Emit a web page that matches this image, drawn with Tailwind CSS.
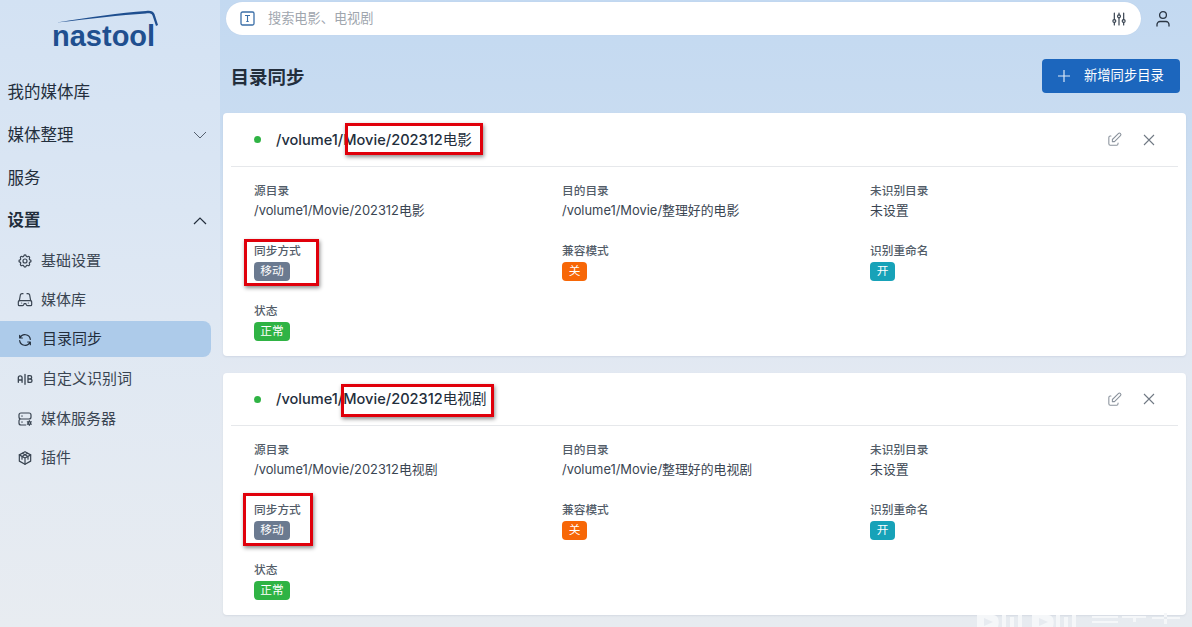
<!DOCTYPE html>
<html lang="zh"><head><meta charset="utf-8">
<script src="https://cdn.jsdelivr.net/npm/@tailwindcss/browser@4"></script>
</head>
<body class="m-0 overflow-hidden font-['Inter','Noto_Sans_CJK_SC',sans-serif] text-[#232e3c]">
<div class="relative w-[1192px] h-[627px] overflow-hidden flex bg-[linear-gradient(180deg,#c3d9f1_0%,#c9dcf1_20%,#e3e9f2_60%,#e7ebf0_100%)]">
  <aside class="w-[220px] shrink-0 h-full flex flex-col bg-[linear-gradient(180deg,#d3e2f3_0%,#dfe8f3_50%,#e8ecf1_100%)]">
    <div class="relative h-[70px] shrink-0">
      <svg class="absolute left-[50px] top-[6px]" width="112" height="24" viewBox="0 0 112 24"><path d="M7 16.500 C 40 11, 70 7, 96 5 C 101 4.600 103 5 104.500 8 L108 19 L106 20 L102.500 9.500 C 101.500 7.500 100 7.200 96 7.400 C 70 9, 40 12.500 7 16.500 Z" fill="#1f4f8f"/></svg>
      <div class="absolute left-[52px] top-[19px] text-[29px] leading-[34px] font-bold text-[#1f4f8f] font-['Liberation_Sans',sans-serif]">nastool</div>
    </div>
    <nav class="flex flex-col">
      <div class="h-[43px] flex items-center pl-[7.500px] pt-[1px] text-[16.500px]">我的媒体库</div>
      <div class="h-[43px] flex items-center justify-between pl-[7.500px] pt-[1px] pr-[13px] text-[16.500px]">媒体整理
        <svg width="14" height="8" viewBox="0 0 14 8" fill="none" stroke="#55606e" stroke-width="1"><path d="M1 1l6 6 6-6"/></svg></div>
      <div class="h-[43px] flex items-center pl-[7.500px] pt-[1px] text-[16.500px]">服务</div>
      <div class="h-[43px] flex items-center justify-between pl-[7.500px] pr-[13px] text-[16.500px] font-bold">设置
        <svg width="14" height="8" viewBox="0 0 14 8" fill="none" stroke="#232e3c" stroke-width="1.200"><path d="M1 7l6-6 6 6"/></svg></div>
      <div class="flex flex-col text-[15px] text-[#3a4552] mr-[9px] -mt-[1px]">
        <div class="h-[39.500px] flex items-center gap-[8px] pl-[17px]">
          <svg width="16" height="16" viewBox="0 0 24 24" fill="none" stroke="#3a4552" stroke-width="1.800" stroke-linecap="round" stroke-linejoin="round"><path d="M10.300 4.300c.4-1.800 3-1.800 3.400 0a1.700 1.700 0 0 0 2.600 1.100c1.500-.9 3.300.8 2.400 2.400a1.700 1.700 0 0 0 1 2.500c1.800.4 1.800 3 0 3.400a1.700 1.700 0 0 0-1 2.600c.9 1.500-.9 3.300-2.400 2.400a1.700 1.700 0 0 0-2.600 1c-.4 1.800-3 1.800-3.400 0a1.700 1.700 0 0 0-2.600-1c-1.500.9-3.300-.9-2.400-2.400a1.700 1.700 0 0 0-1-2.600c-1.800-.4-1.800-3 0-3.400a1.700 1.700 0 0 0 1-2.500c-.9-1.600.9-3.300 2.400-2.400 1 .6 2.300.1 2.600-1.100z"/><circle cx="12" cy="12" r="3"/></svg>基础设置</div>
        <div class="h-[39.500px] flex items-center gap-[8px] pl-[17px]">
          <svg width="16" height="16" viewBox="0 0 24 24" fill="none" stroke="#3a4552" stroke-width="1.800" stroke-linecap="round" stroke-linejoin="round"><path d="M2 14.500V19a1.500 1.500 0 0 0 1.500 1.500H8c1 0 1.600-.6 2-1.500l.6-1.500h2.800L14 19c.4.9 1 1.500 2 1.500h4.500A1.500 1.500 0 0 0 22 19v-4.500a1.500 1.500 0 0 0-1.500-1.500h-17A1.500 1.500 0 0 0 2 14.500z"/><path d="M3.500 13 5 4.500C5.300 3.200 6 2.500 7.500 2.500H9M20.500 13 19 4.500C18.700 3.200 18 2.500 16.500 2.500H15M7 16.500h.01M17 16.500h.01"/></svg>媒体库</div>
        <div class="h-[35.500px] mt-[1.250px] mb-[2.750px] pt-[1px] flex items-center gap-[9px] pl-[17px] bg-[#adcbea] rounded-r-lg text-[#232e3c]">
          <svg width="16" height="16" viewBox="0 0 24 24" fill="none" stroke="#232e3c" stroke-width="1.800" stroke-linecap="round" stroke-linejoin="round"><path d="M20 11A8.100 8.100 0 0 0 4.500 9M4 5v4h4"/><path d="M4 13a8.100 8.100 0 0 0 15.500 2M20 19v-4h-4"/></svg>目录同步</div>
        <div class="h-[39.500px] flex items-center gap-[9px] pl-[17px]">
          <svg width="16" height="16" viewBox="0 0 24 24" fill="none" stroke="#3a4552" stroke-width="2" stroke-linecap="round" stroke-linejoin="round"><path d="M2 17V10a2.800 2.800 0 0 1 5.600 0v7M2 13.500h5.600M12 5v15M16.500 7v10M16.500 7h3a2.500 2.500 0 0 1 0 5h-3 3.500a2.500 2.500 0 0 1 0 5h-3.500"/></svg>自定义识别词</div>
        <div class="h-[39.500px] flex items-center gap-[8px] pl-[17px]">
          <svg width="16" height="16" viewBox="0 0 24 24" fill="none" stroke="#3a4552" stroke-width="1.800" stroke-linecap="round" stroke-linejoin="round"><path d="M3 6a3 3 0 0 1 3-3h12a3 3 0 0 1 3 3v3a3 3 0 0 1-3 3H6a3 3 0 0 1-3-3zM13 21H6a3 3 0 0 1-3-3v-3a3 3 0 0 1 3-3h8M7 7.500h1M7 16.500h1"/><circle cx="18.500" cy="18" r="2"/><path d="M18.500 14.500V16M18.500 20v1.500M15.500 16.200l1.300.8M20.200 19l1.300.8M15.500 19.800l1.300-.8M20.200 17l1.300-.8"/></svg>媒体服务器</div>
        <div class="h-[39.500px] flex items-center gap-[8px] pl-[17px]">
          <svg width="16" height="16" viewBox="0 0 24 24" fill="none" stroke="#3a4552" stroke-width="1.800" stroke-linecap="round" stroke-linejoin="round"><path d="M12 2.500l8.500 4.800v9.400L12 21.500l-8.500-4.800V7.300z"/><path d="M12 12l8.500-4.700M12 12v9.500M12 12 3.500 7.300M8 5l8.500 4.700v4M16 5 7.500 9.700v4"/></svg>插件</div>
      </div>
    </nav>
  </aside>
  <main class="flex-1 min-w-0 flex flex-col">
    <div class="flex items-center h-[33px] mt-[2px] ml-[6px] mr-[21px] gap-[14px]">
      <div class="flex-1 h-full bg-white rounded-full flex items-center pl-[14px] pr-[13px] shadow-[0_0_1px_rgba(60,90,130,0.1)]">
        <svg width="15" height="15" viewBox="0 0 15 15" fill="none"><rect x="1" y="1" width="13" height="13" rx="1.500" stroke="#3b6fa8" stroke-width="1.300"/><path d="M5 4.500h5M7.500 4.500v6M6.300 10.500h2.400" stroke="#3b6fa8" stroke-width="1.100"/></svg>
        <span class="ml-[13px] text-[13.200px] text-[#a0a6ae]">搜索电影、电视剧</span>
        <svg class="ml-auto mr-[1px]" width="16" height="16" viewBox="0 0 24 24" fill="none" stroke="#3a4552" stroke-width="1.800" stroke-linecap="round" stroke-linejoin="round"><circle cx="5" cy="15" r="2.200"/><path d="M5 3v9.800M5 17.200V21"/><circle cx="12" cy="8" r="2.200"/><path d="M12 3v2.800M12 10.200V21"/><circle cx="19" cy="15" r="2.200"/><path d="M19 3v9.800M19 17.200V21"/></svg>
      </div>
      <svg width="16" height="18" viewBox="0 0 16 18" fill="none" stroke="#2b3644" stroke-width="1.300" stroke-linecap="round"><circle cx="8" cy="5" r="3.400"/><path d="M2 16v-1.500a3 3 0 0 1 3-3h6a3 3 0 0 1 3 3V16"/></svg>
    </div>
    <div class="flex items-center justify-between h-[34px] mt-[24px] ml-[10.500px] mr-[12px]">
      <h1 class="text-[18.500px] font-bold text-[#232e3c] pt-[3px]">目录同步</h1>
      <button class="w-[138px] h-[34px] rounded bg-[#1c66bd] text-white text-[13.300px] font-normal flex items-center pl-[15px] gap-[13px]">
        <svg width="14" height="14" viewBox="0 0 14 14" fill="none" stroke="#dbe8f7" stroke-width="1.200"><path d="M7 1v12M1 7h12"/></svg>新增同步目录</button>
    </div>
    <section class="mt-[20px] ml-[3px] mr-[6px] h-[243px] bg-white rounded shadow-[0_1px_2px_rgba(60,80,110,0.1)]">
      <div class="flex items-center h-[54px] mx-[8px] border-b border-[#e6e8eb] pl-[23px] pr-[23px]">
        <span class="w-[7px] h-[7px] rounded-full bg-[#2fb344]"></span>
        <span class="ml-[15px] pt-[2px] text-[14.600px] font-medium text-[#232e3c]">/volume1/Movie/202312<span class="font-normal">电影</span></span>
        <svg class="ml-auto" width="17" height="17" viewBox="0 0 24 24" fill="none" stroke="#8a929c" stroke-width="1.500" stroke-linecap="round" stroke-linejoin="round"><path d="M7 7H6a2 2 0 0 0-2 2v9a2 2 0 0 0 2 2h9a2 2 0 0 0 2-2v-1"/><path d="M20.400 6.600a2.100 2.100 0 0 0-3-3L9 12v3h3z"/></svg>
        <svg class="ml-[20px]" width="12" height="12" viewBox="0 0 12 12" fill="none" stroke="#707984" stroke-width="1.100"><path d="M1 1l10 10M11 1 1 11"/></svg>
      </div>
      <div class="grid grid-cols-3 auto-rows-[60px] pl-[31px] pr-[8px] pt-[14px] text-[12.900px]">
        <div><div class="h-[20px] leading-[20px] text-[11.700px] font-medium text-[#525c68]">源目录</div><div class="h-[20px] leading-[20px] text-[#3a4552]">/volume1/Movie/202312电影</div></div>
        <div><div class="h-[20px] leading-[20px] text-[11.700px] font-medium text-[#525c68]">目的目录</div><div class="h-[20px] leading-[20px] text-[#3a4552]">/volume1/Movie/整理好的电影</div></div>
        <div><div class="h-[20px] leading-[20px] text-[11.700px] font-medium text-[#525c68]">未识别目录</div><div class="h-[20px] leading-[20px] text-[#3a4552]">未设置</div></div>
        <div><div class="h-[20px] leading-[20px] text-[11.700px] font-medium text-[#525c68]">同步方式</div><span class="inline-flex items-center justify-center h-[19px] w-[36px] mt-[1px] rounded bg-[#6b7a90] text-white text-[11.700px]">移动</span></div>
        <div><div class="h-[20px] leading-[20px] text-[11.700px] font-medium text-[#525c68]">兼容模式</div><span class="inline-flex items-center justify-center h-[19px] w-[25px] mt-[1px] rounded bg-[#f76707] text-white text-[11.700px]">关</span></div>
        <div><div class="h-[20px] leading-[20px] text-[11.700px] font-medium text-[#525c68]">识别重命名</div><span class="inline-flex items-center justify-center h-[19px] w-[25px] mt-[1px] rounded bg-[#17a2b8] text-white text-[11.700px]">开</span></div>
        <div><div class="h-[20px] leading-[20px] text-[11.700px] font-medium text-[#525c68]">状态</div><span class="inline-flex items-center justify-center h-[19px] w-[36px] mt-[1px] rounded bg-[#2fb344] text-white text-[11.700px]">正常</span></div>
      </div>
    </section>
    <section class="mt-[17px] ml-[3px] mr-[6px] h-[242px] bg-white rounded shadow-[0_1px_2px_rgba(60,80,110,0.1)]">
      <div class="flex items-center h-[53px] mx-[8px] border-b border-[#e6e8eb] pl-[23px] pr-[23px]">
        <span class="w-[7px] h-[7px] rounded-full bg-[#2fb344]"></span>
        <span class="ml-[15px] pt-[1px] text-[14.600px] font-medium text-[#232e3c]">/volume1/Movie/202312<span class="font-normal">电视剧</span></span>
        <svg class="ml-auto" width="17" height="17" viewBox="0 0 24 24" fill="none" stroke="#8a929c" stroke-width="1.500" stroke-linecap="round" stroke-linejoin="round"><path d="M7 7H6a2 2 0 0 0-2 2v9a2 2 0 0 0 2 2h9a2 2 0 0 0 2-2v-1"/><path d="M20.400 6.600a2.100 2.100 0 0 0-3-3L9 12v3h3z"/></svg>
        <svg class="ml-[20px]" width="12" height="12" viewBox="0 0 12 12" fill="none" stroke="#707984" stroke-width="1.100"><path d="M1 1l10 10M11 1 1 11"/></svg>
      </div>
      <div class="grid grid-cols-3 auto-rows-[60px] pl-[31px] pr-[8px] pt-[14px] text-[12.900px]">
        <div><div class="h-[20px] leading-[20px] text-[11.700px] font-medium text-[#525c68]">源目录</div><div class="h-[20px] leading-[20px] text-[#3a4552]">/volume1/Movie/202312电视剧</div></div>
        <div><div class="h-[20px] leading-[20px] text-[11.700px] font-medium text-[#525c68]">目的目录</div><div class="h-[20px] leading-[20px] text-[#3a4552]">/volume1/Movie/整理好的电视剧</div></div>
        <div><div class="h-[20px] leading-[20px] text-[11.700px] font-medium text-[#525c68]">未识别目录</div><div class="h-[20px] leading-[20px] text-[#3a4552]">未设置</div></div>
        <div><div class="h-[20px] leading-[20px] text-[11.700px] font-medium text-[#525c68]">同步方式</div><span class="inline-flex items-center justify-center h-[19px] w-[36px] mt-[1px] rounded bg-[#6b7a90] text-white text-[11.700px]">移动</span></div>
        <div><div class="h-[20px] leading-[20px] text-[11.700px] font-medium text-[#525c68]">兼容模式</div><span class="inline-flex items-center justify-center h-[19px] w-[25px] mt-[1px] rounded bg-[#f76707] text-white text-[11.700px]">关</span></div>
        <div><div class="h-[20px] leading-[20px] text-[11.700px] font-medium text-[#525c68]">识别重命名</div><span class="inline-flex items-center justify-center h-[19px] w-[25px] mt-[1px] rounded bg-[#17a2b8] text-white text-[11.700px]">开</span></div>
        <div><div class="h-[20px] leading-[20px] text-[11.700px] font-medium text-[#525c68]">状态</div><span class="inline-flex items-center justify-center h-[19px] w-[36px] mt-[1px] rounded bg-[#2fb344] text-white text-[11.700px]">正常</span></div>
      </div>
    </section>
  </main>
  <!-- red annotation boxes over the screenshot -->
  <div class="absolute left-[345px] top-[123px] w-[138px] h-[32px] border-[3px] border-[#e0000b] shadow-[1px_2px_4px_rgba(0,0,0,0.45)]"></div>
  <div class="absolute left-[243.500px] top-[239px] w-[75px] h-[47px] border-[3px] border-[#e0000b] shadow-[1px_2px_4px_rgba(0,0,0,0.45)]"></div>
  <div class="absolute left-[341px] top-[384px] w-[153px] h-[33px] border-[3px] border-[#e0000b] shadow-[1px_2px_4px_rgba(0,0,0,0.45)]"></div>
  <div class="absolute left-[243px] top-[493px] w-[70px] h-[53px] border-[3px] border-[#e0000b] shadow-[1px_2px_4px_rgba(0,0,0,0.45)]"></div>
  <!-- faint watermark, bottom right -->
  <svg class="absolute left-[970px] top-[610px]" width="222" height="17" viewBox="0 0 222 17" fill="#f5f7f9" fill-rule="evenodd"><path d="M7 5h16c5 0 7 5 5 12H7zM14 8v8l9-4z"/><path d="M32 5h4v12h-4zM40 7h4v10h-4zM48 5h4v12h-4z"/><path d="M62 5h16c5 0 7 5 5 12H62zM69 8v8l9-4z"/><path d="M86 5h4v12h-4zM94 7h4v10h-4zM102 5h4v12h-4z"/><path d="M122 6h26v2h-26zM122 11h26v2h-26zM152 6h24v2h-24zM163 8h3v4h-3zM182 7h28v2h-28zM194 3h3v11h-3z"/></svg>
</div>
</body></html>
